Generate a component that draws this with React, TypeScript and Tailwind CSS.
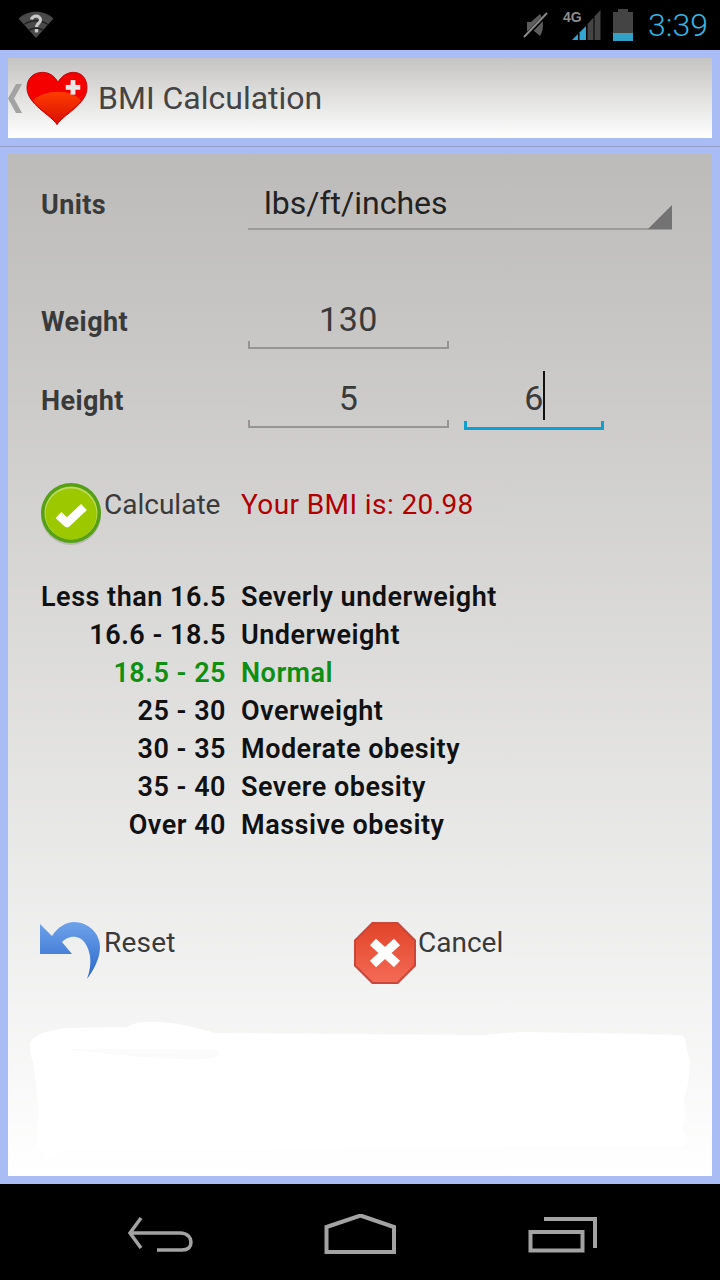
import React from 'react';

const RANGES = [
  { range: 'Less than 16.5', label: 'Severly underweight' },
  { range: '16.6 - 18.5', label: 'Underweight' },
  { range: '18.5 - 25', label: 'Normal', active: true },
  { range: '25 - 30', label: 'Overweight' },
  { range: '30 - 35', label: 'Moderate obesity' },
  { range: '35 - 40', label: 'Severe obesity' },
  { range: 'Over 40', label: 'Massive obesity' },
];

const WifiIcon = () => (
  <svg width="36" height="30" viewBox="0 0 36 30" className="ml-[18px]">
    <path d="M0.5 8.5 C10 -0.5 26 -0.5 35.5 8.5 L18 28 Z" fill="#4a4a4a" />
    <path d="M6 14.5 C13 9.5 23 9.5 30 14.5" stroke="#222" strokeWidth="1.5" fill="none" />
    <path d="M11 20 C15 17.5 21 17.5 25 20" stroke="#222" strokeWidth="1.5" fill="none" />
    <path d="M13.5 9.5 C14 5 22.5 5 22.5 10 C22.5 13.5 18.5 13 18.5 17" stroke="#c8c8c8" strokeWidth="3.2" fill="none" />
    <rect x="16.8" y="19" width="3.4" height="3.4" fill="#c8c8c8" />
  </svg>
);

const MuteIcon = () => (
  <svg width="26" height="28" viewBox="0 0 26 28">
    <path d="M8 11 L17 3 C21 9 21 19 17 25 L11 20 H4 V11 Z" fill="#5c5c5c" />
    <path d="M1 27 L25 2" stroke="#000" strokeWidth="4" />
    <path d="M1 26 L24 2" stroke="#8a8a8a" strokeWidth="2" />
  </svg>
);

const SignalIcon = () => (
  <div className="relative h-[32px] w-[38px]">
    <svg width="30" height="32" viewBox="0 0 30 32" className="absolute right-0 top-0">
      <path d="M16.5 31 V15 L22.5 8.5 V31 Z" fill="#444" />
      <path d="M23.5 31 V7.5 L29.5 1 V31 Z" fill="#444" />
      <path d="M1 31 L7 25 V31 Z" fill="#33a5d5" />
      <path d="M8.5 31 V23.5 L15 17 V31 Z" fill="#33a5d5" />
    </svg>
    <span className="absolute left-0 top-0 font-['Liberation_Sans',sans-serif] text-[14px] font-bold leading-[16px] text-[#8c8c8c]">4G</span>
  </div>
);

const BatteryIcon = () => (
  <div className="flex h-[32px] w-[20px] flex-col items-center">
    <div className="h-[3px] w-[10px] bg-[#444]" />
    <div className="flex w-[20px] flex-1 flex-col justify-end bg-[#444]">
      <div className="h-[8px] bg-[#33a0c8]" />
    </div>
  </div>
);

const HeartIcon = () => (
  <svg width="62" height="55" viewBox="0 0 64 56">
    <defs>
      <linearGradient id="hl" x1="0" y1="0" x2="0" y2="1">
        <stop offset="0" stopColor="#ff3c00" />
        <stop offset="1" stopColor="#d81000" />
      </linearGradient>
    </defs>
    <path d="M32 55 C26 45 1 34 1 17 C1 6 9 1 17 1 C25 1 30 6 33 11 C37 5 42 1 49 1 C57 1 63 7 63 17 C63 34 38 45 32 55 Z" fill="#f40000" stroke="#b80c0c" strokeWidth="1" />
    <path d="M7 30 C13 24 23 21 33 21 C44 21 52 24 57 30 C49 40 36 46 32 54 C28 46 15 40 7 30 Z" fill="url(#hl)" />
    <rect x="46" y="9" width="5" height="15" fill="#e8e8e8" />
    <rect x="41" y="14" width="15" height="5" fill="#e8e8e8" />
  </svg>
);

const CheckIcon = () => (
  <svg width="64" height="64" viewBox="0 0 64 64">
    <ellipse cx="31" cy="33" rx="30" ry="30" fill="#000" opacity="0.12" />
    <circle cx="31" cy="31" r="30" fill="#56a016" />
    <circle cx="31" cy="31" r="26.5" fill="#bcd95a" />
    <circle cx="31" cy="32" r="25.5" fill="#9cc800" />
    <path d="M18.5 33 L27 41 L44 25" stroke="#fff" strokeWidth="8.5" fill="none" strokeLinejoin="round" />
  </svg>
);

const ResetIcon = () => (
  <svg width="62" height="60" viewBox="0 0 62 60">
    <defs>
      <linearGradient id="rs" x1="0" y1="0" x2="0" y2="1">
        <stop offset="0" stopColor="#6fa3ea" />
        <stop offset="1" stopColor="#2a66cc" />
      </linearGradient>
    </defs>
    <path d="M0 3 L12 15 C18 6 26 1 34 1 C48 1 60 12 60 26 C60 38 53 50 47 58 C50 50 51 42 50 35 C48 24 43 17 36 16 C30 15 25 18 22 21 L32 33 H0 Z" fill="url(#rs)" />
  </svg>
);

const CancelIcon = () => (
  <svg width="62" height="64" viewBox="0 0 62 64">
    <defs>
      <linearGradient id="cn" x1="0" y1="0" x2="0" y2="1">
        <stop offset="0" stopColor="#e0452a" />
        <stop offset="1" stopColor="#f56a55" />
      </linearGradient>
    </defs>
    <path d="M18 1 H44 L62 19 V45 L44 63 H18 L0 45 V19 Z" fill="#c8473a" />
    <path d="M19 3 H43 L60 20 V44 L43 61 H19 L2 44 V20 Z" fill="url(#cn)" />
    <path d="M19 21 L43 43 M43 21 L19 43" stroke="#fff" strokeWidth="9" />
  </svg>
);

const Scribble = () => (
  <svg width="704" height="140" viewBox="8 1020 704 140" className="block">
    <path
      d="M30 1043 C36 1036 44 1033 50 1032 L64 1029 L128 1028 C132 1023 150 1022 160 1023 L179 1025 L216 1034 L482 1036 L519 1033 L588 1034 L680 1036 C684 1037 686 1040 685 1043 L690 1063 L688 1085 L684 1100 L686 1117 L682 1128 L688 1140 L684 1147 L551 1148 L60 1152 L46 1157 L37 1150 L38 1107 L34 1067 L30 1053 Z"
      fill="#ffffff"
    />
    <path d="M65 1050 C100 1055 180 1062 205 1060 C220 1058 222 1054 215 1051 C170 1050 100 1050 65 1050 Z" fill="#fbfbfb" />
  </svg>
);

const EditField = ({ value, focused, width }: { value: string; focused?: boolean; width: string }) => (
  <div className={`flex h-[50px] flex-col ${width}`}>
    <div className="flex flex-1 items-center justify-center pb-[4px] text-[34px] leading-none tracking-[0.5px] text-[#3a3a3a]">
      <span className="relative">
        {value}
        {focused && <span className="absolute -right-[1px] -top-[10px] h-[49px] w-[1.5px] bg-[#111]" />}
      </span>
    </div>
    {focused ? (
      <div className="-mb-[1px] h-[9px] border-x-[3px] border-b-[3px] border-[#0ea0d0]" />
    ) : (
      <div className="mb-[1px] h-[8px] border-x-2 border-b-2 border-[#959595]" />
    )}
  </div>
);

const App: React.FC = () => {
  return (
    <div className="flex h-[1280px] w-[720px] flex-col overflow-hidden bg-black font-['Roboto',sans-serif]">
      {/* Status bar */}
      <div className="flex h-[50px] items-center justify-between pr-[12px]">
        <WifiIcon />
        <div className="flex items-center">
          <MuteIcon />
          <div className="ml-[14px]"><SignalIcon /></div>
          <div className="ml-[12px]"><BatteryIcon /></div>
          <span className="ml-[15px] text-[32px] font-light leading-none text-[#33b5e5]">3:39</span>
        </div>
      </div>

      {/* Framed app area */}
      <div className="flex flex-1 flex-col bg-[#aabcf5] px-[8px] py-[8px]">
        <div className="flex h-[80px] items-center bg-gradient-to-b from-[#c5c4c2] to-[#ffffff]">
          <svg width="14" height="29" viewBox="0 0 14 29">
            <path d="M8 0 H14 L6 14.5 L14 29 H8 L0 14.5 Z" fill="#a3a3a3" />
          </svg>
          <div className="ml-[4px]"><HeartIcon /></div>
          <span className="ml-[10px] text-[32px] leading-none text-[#444444]">BMI Calculation</span>
        </div>
        <div className="-mx-[8px] mt-[8px] h-[1px] bg-[#8f9cc8]" />
        <div className="h-[7px]" />

        <div className="flex flex-1 flex-col bg-gradient-to-b from-[#bcbbb9] to-[#ffffff]">
          <div className="mt-[26px] flex h-[50px] items-center pl-[33px]">
            <span className="w-[207px] text-[27px] font-bold tracking-[0.4px] text-[#3a3a3a]">Units</span>
            <div className="flex h-[50px] w-[424px] items-end justify-between border-b-2 border-[#9b9a99] pl-[16px]">
              <span className="mb-[2px] self-center text-[32px] leading-none text-[#222222]">lbs/ft/inches</span>
              <svg width="24" height="24" viewBox="0 0 24 24" className="-mb-[1px]">
                <path d="M24 0 V24 H0 Z" fill="#737373" />
              </svg>
            </div>
          </div>

          <div className="mt-[70px] flex h-[50px] items-center pl-[33px]">
            <span className="-mt-[5px] w-[207px] text-[27px] font-bold tracking-[0.4px] text-[#3a3a3a]">Weight</span>
            <EditField value="130" width="w-[201px]" />
          </div>

          <div className="mt-[29px] flex h-[50px] items-center pl-[33px]">
            <span className="-mt-[5px] w-[207px] text-[27px] font-bold tracking-[0.4px] text-[#3a3a3a]">Height</span>
            <EditField value="5" width="w-[201px]" />
            <div className="ml-[15px]"><EditField value="6" focused width="w-[140px]" /></div>
          </div>

          <div className="mt-[53px] flex h-[64px] items-start pl-[32px]">
            <CheckIcon />
            <span className="mt-[5px] w-[137px] text-[28px] leading-[36px] text-[#3a3a3a]">Calculate</span>
            <span className="mt-[5px] text-[28px] leading-[36px] tracking-[0.4px] text-[#b00000]">Your BMI is: 20.98</span>
          </div>

          <div className="mt-[32px] flex flex-col pl-[33px] text-[27px] font-semibold leading-[38px] tracking-[0.5px]">
            {RANGES.map((r) => (
              <div key={r.label} className={`flex ${r.active ? 'text-[#0f8f12]' : 'text-[#111111]'}`}>
                <span className="w-[185px] text-right">{r.range}</span>
                <span className="ml-[15px]">{r.label}</span>
              </div>
            ))}
          </div>

          <div className="mt-[77px] flex h-[64px] items-start pl-[32px]">
            <ResetIcon />
            <span className="mt-[4px] ml-[2px] w-[250px] text-[28px] leading-[36px] tracking-[0.2px] text-[#3a3a3a]">Reset</span>
            <CancelIcon />
            <span className="mt-[4px] ml-[2px] text-[28px] leading-[36px] text-[#3a3a3a]">Cancel</span>
          </div>

          <div className="mt-[34px]"><Scribble /></div>
        </div>
      </div>

      {/* Nav bar */}
      <div className="flex h-[96px] items-start pt-[30px]">
        <svg width="720" height="40" viewBox="0 0 720 40" className="block">
          <g fill="none" stroke="#a3a3a3" strokeWidth="4">
            <path d="M141 4 L130 19 L141 34 M130 19 H180 C188 19 191 24 191 28 C191 33 188 36 182 36 H157" strokeWidth="3.5" />
            <path d="M326.5 38 V13 L360.5 1.5 L394 13 V38 Z" />
            <path d="M544 5 H595 V34" />
            <rect x="530.5" y="18" width="52" height="18.5" />
          </g>
        </svg>
      </div>
    </div>
  );
};

export default App;
